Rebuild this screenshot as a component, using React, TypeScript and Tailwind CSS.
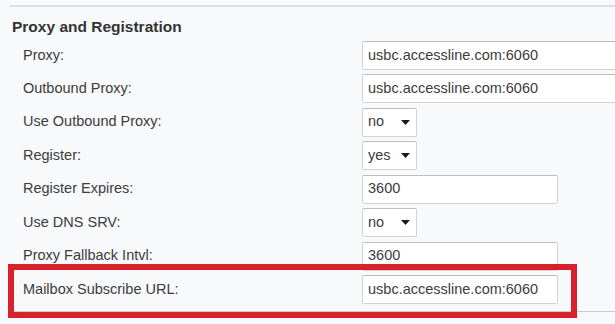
import React from "react";

type Row = { label: string; kind: "long" | "short" | "select"; value: string };

const rows: Row[] = [
  { label: "Proxy:", kind: "long", value: "usbc.accessline.com:6060" },
  { label: "Outbound Proxy:", kind: "long", value: "usbc.accessline.com:6060" },
  { label: "Use Outbound Proxy:", kind: "select", value: "no" },
  { label: "Register:", kind: "select", value: "yes" },
  { label: "Register Expires:", kind: "short", value: "3600" },
  { label: "Use DNS SRV:", kind: "select", value: "no" },
  { label: "Proxy Fallback Intvl:", kind: "short", value: "3600" },
  { label: "Mailbox Subscribe URL:", kind: "short", value: "usbc.accessline.com:6060" },
];

function Field({ row }: { row: Row }) {
  if (row.kind === "select") {
    return (
      <div className="flex h-[29px] w-[55px] items-center justify-between rounded-[2px] border border-[#d2d2d2] border-t-[#bdbdbd] bg-white pl-[5px] pr-[6px] text-[14.5px] text-[#3c3c3c]">
        <span>{row.value}</span>
        <svg width="9" height="5" viewBox="0 0 9 5">
          <path d="M0 0 L9 0 L4.5 5 Z" fill="#1a1a1a" />
        </svg>
      </div>
    );
  }
  const w = row.kind === "long" ? "w-[262px]" : "w-[196px]";
  return (
    <div
      className={`flex h-[29px] ${w} shrink-0 items-center rounded-[2px] border border-[#d2d2d2] border-t-[#bdbdbd] bg-white pl-[5px] text-[14.5px] text-[#3c3c3c]`}
    >
      {row.value}
    </div>
  );
}

export default function App() {
  return (
    <div
      className="relative h-[324px] w-[615px] overflow-hidden bg-[#f8f9fb]"
      style={{ fontFamily: '"Liberation Sans", Arial, sans-serif' }}
    >
      <div className="ml-[10px] pt-[5px]">
        <div className="h-[2px] bg-[#dcdfe3]" />
      </div>
      <div className="ml-[12px] flex h-[34px] items-center pt-[5px] text-[15.5px] font-bold text-[#333]">
        Proxy and Registration
      </div>
      <div className="flex flex-col">
        {rows.map((r) => (
          <div key={r.label} className="h-[33.43px]">
            <div className="flex h-[29px] items-center">
              <div className="w-[362px] shrink-0 pl-[23px] text-[14.5px] text-[#3c3c3c]">
                {r.label}
              </div>
              <Field row={r} />
            </div>
          </div>
        ))}
      </div>
      <div className="absolute left-[10px] right-0 top-[311px] h-[1px] bg-[#c9ccd0]" />
      <div className="absolute left-[8px] top-[264px] h-[54px] w-[569px] border-[6px] border-[#d7212b]" />
    </div>
  );
}
